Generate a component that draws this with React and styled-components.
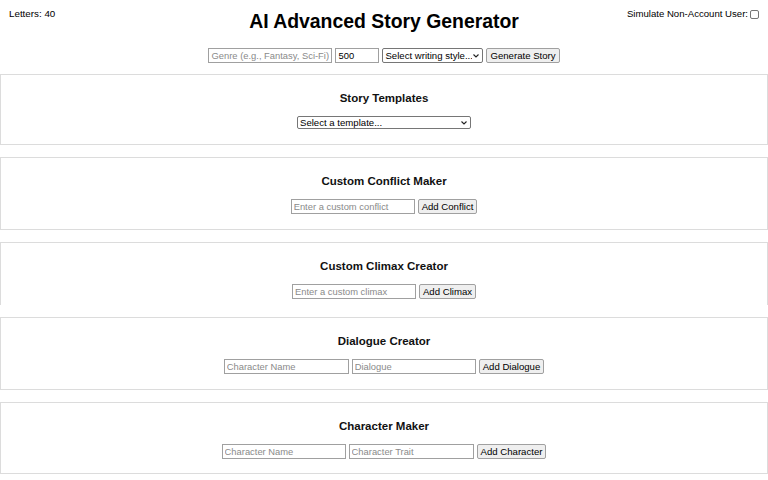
import React from "react";
import styled, { createGlobalStyle } from "styled-components";

const Global = createGlobalStyle`
  html, body { margin: 0; padding: 0; background: #fff; }
  body { font-family: "Liberation Sans", Arial, sans-serif; color: #000; }
  * { box-sizing: border-box; }
`;

const Header = styled.header`
  display: grid;
  grid-template-columns: 1fr auto 1fr;
  align-items: start;
  padding: 0 9px;
`;

const Letters = styled.div`
  font-size: 9.8px;
  line-height: 12px;
  padding-top: 8px;
`;

const Title = styled.h1`
  margin: 10px 0 0;
  font-size: 19.4px;
  line-height: 23px;
  font-weight: bold;
  text-align: center;
`;

const Simulate = styled.label`
  justify-self: end;
  display: flex;
  align-items: center;
  gap: 2px;
  font-size: 9.6px;
  line-height: 12px;
  padding-top: 8px;
`;

const Check = styled.input.attrs({ type: "checkbox" })`
  appearance: none;
  margin: 0;
  width: 9px;
  height: 9px;
  border: 1px solid #767676;
  border-radius: 2px;
  background: #fff;
`;

const Controls = styled.div`
  display: flex;
  justify-content: center;
  align-items: center;
  gap: 3px;
  margin: 15px 0 11px;
`;

const Field = styled.input`
  width: ${(p) => p.$w}px;
  height: ${(p) => p.$h || 15}px;
  margin: 0;
  padding: 0 2px;
  font-family: "Liberation Sans", Arial, sans-serif;
  font-size: 9.4px;
  color: #000;
  border: 1px solid #a0a0a0;
  border-radius: 0;
  background: #fff;
  &::placeholder { color: #8a8a8a; }
`;

const SelectWrap = styled.div`
  position: relative;
  display: inline-flex;
  width: ${(p) => p.$w}px;
  height: ${(p) => p.$h || 15}px;
`;

const Select = styled.select`
  appearance: none;
  width: 100%;
  height: 100%;
  margin: 0;
  padding: 0 10px 0 2px;
  font-family: "Liberation Sans", Arial, sans-serif;
  font-size: 9.6px;
  color: #000;
  border: 1px solid #767676;
  border-radius: 2px;
  background: #fff;
`;

const Chevron = styled.svg`
  position: absolute;
  right: 4px;
  top: 50%;
  width: 6px;
  height: 4px;
  margin-top: -2px;
  pointer-events: none;
`;

const Button = styled.button`
  height: 15px;
  margin: 0;
  padding: 0 3px;
  font-family: "Liberation Sans", Arial, sans-serif;
  font-size: 9.6px;
  line-height: 13px;
  color: #000;
  background: #efefef;
  border: 1px solid #a0a0a0;
  border-radius: 2px;
`;

const Section = styled.section`
  border: 1px solid #dcdcdc;
  border-bottom: ${(p) => (p.$clipped ? "none" : "1px solid #dcdcdc")};
  height: ${(p) => (p.$clipped ? "63px" : "auto")};
  overflow: hidden;
  padding: 17px 0 ${(p) => p.$pb || 15}px;
  margin-bottom: 12px;
  display: flex;
  flex-direction: column;
  align-items: center;
`;

const SectionTitle = styled.h3`
  margin: 0 0 11px;
  font-size: 11.5px;
  line-height: 13px;
  font-weight: bold;
  color: #111;
`;

const Row = styled.div`
  display: flex;
  align-items: center;
  gap: 3px;
`;

function Dropdown({ w, h, label }) {
  return (
    <SelectWrap $w={w} $h={h}>
      <Select defaultValue="">
        <option value="">{label}</option>
      </Select>
      <Chevron viewBox="0 0 6 4">
        <path d="M0.5 0.5 L3 3 L5.5 0.5" fill="none" stroke="#222" strokeWidth="1.1" />
      </Chevron>
    </SelectWrap>
  );
}

export default function App() {
  return (
    <>
      <Global />
      <Header>
        <Letters>Letters: 40</Letters>
        <Title>AI Advanced Story Generator</Title>
        <Simulate>
          Simulate Non-Account User: <Check />
        </Simulate>
      </Header>
      <Controls>
        <Field $w={124} placeholder="Genre (e.g., Fantasy, Sci-Fi)" />
        <Field $w={44} defaultValue="500" type="text" />
        <Dropdown w={101} label="Select writing style..." />
        <Button>Generate Story</Button>
      </Controls>

      <Section>
        <SectionTitle>Story Templates</SectionTitle>
        <Dropdown w={174} h={13} label="Select a template..." />
      </Section>

      <Section>
        <SectionTitle>Custom Conflict Maker</SectionTitle>
        <Row>
          <Field $w={124} placeholder="Enter a custom conflict" />
          <Button>Add Conflict</Button>
        </Row>
      </Section>

      <Section $clipped>
        <SectionTitle>Custom Climax Creator</SectionTitle>
        <Row>
          <Field $w={124} placeholder="Enter a custom climax" />
          <Button>Add Climax</Button>
        </Row>
      </Section>

      <Section>
        <SectionTitle>Dialogue Creator</SectionTitle>
        <Row>
          <Field $w={125} placeholder="Character Name" />
          <Field $w={124} placeholder="Dialogue" />
          <Button>Add Dialogue</Button>
        </Row>
      </Section>

      <Section $pb={14}>
        <SectionTitle>Character Maker</SectionTitle>
        <Row>
          <Field $w={124} placeholder="Character Name" />
          <Field $w={125} placeholder="Character Trait" />
          <Button>Add Character</Button>
        </Row>
      </Section>
    </>
  );
}
